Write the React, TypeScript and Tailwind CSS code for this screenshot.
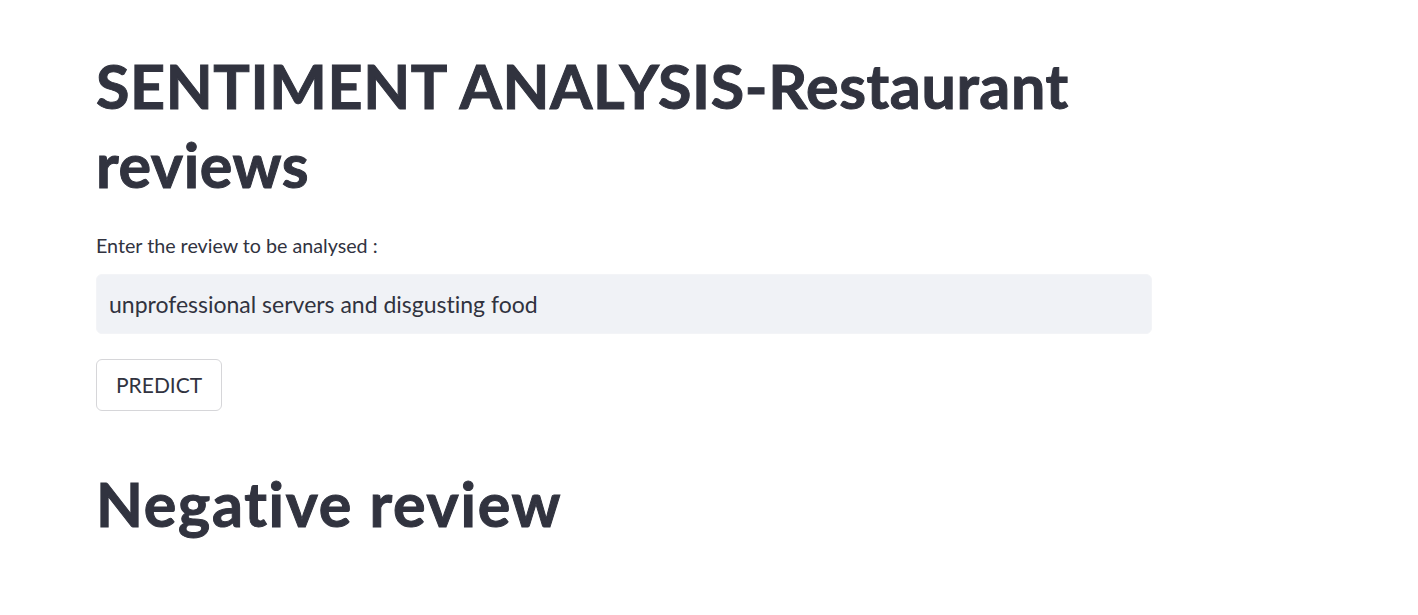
export default function App() {
  return (
    <div className="min-h-[615px] bg-white text-[#31333F] [font-variant-ligatures:none]" style={{ fontFamily: 'Lato, "Liberation Sans", sans-serif' }}>
      <div className="w-[1056px] ml-[96px] pt-[46px]">
        <h1 className="text-[61px] leading-[79px] font-bold tracking-[0.6px] [-webkit-text-stroke:1px_#31333F]">SENTIMENT ANALYSIS-Restaurant reviews</h1>
        <div className="mt-[30px] text-[19.7px] leading-[24px]">Enter the review to be analysed :</div>
        <div className="mt-[16px] h-[60px] rounded-[6px] bg-[#f0f2f6] border border-[#f3f4f7] flex items-center px-[12px] text-[23px]">
          unprofessional servers and disgusting food
        </div>
        <button className="mt-[25px] h-[52px] px-[19px] rounded-[6px] border border-[#d6d6d9] bg-white text-[21px] flex items-center">
          PREDICT
        </button>
        <h1 className="mt-[53px] text-[61px] leading-[79px] font-bold tracking-[1.7px] [-webkit-text-stroke:1px_#31333F]">Negative review</h1>
      </div>
    </div>
  );
}
